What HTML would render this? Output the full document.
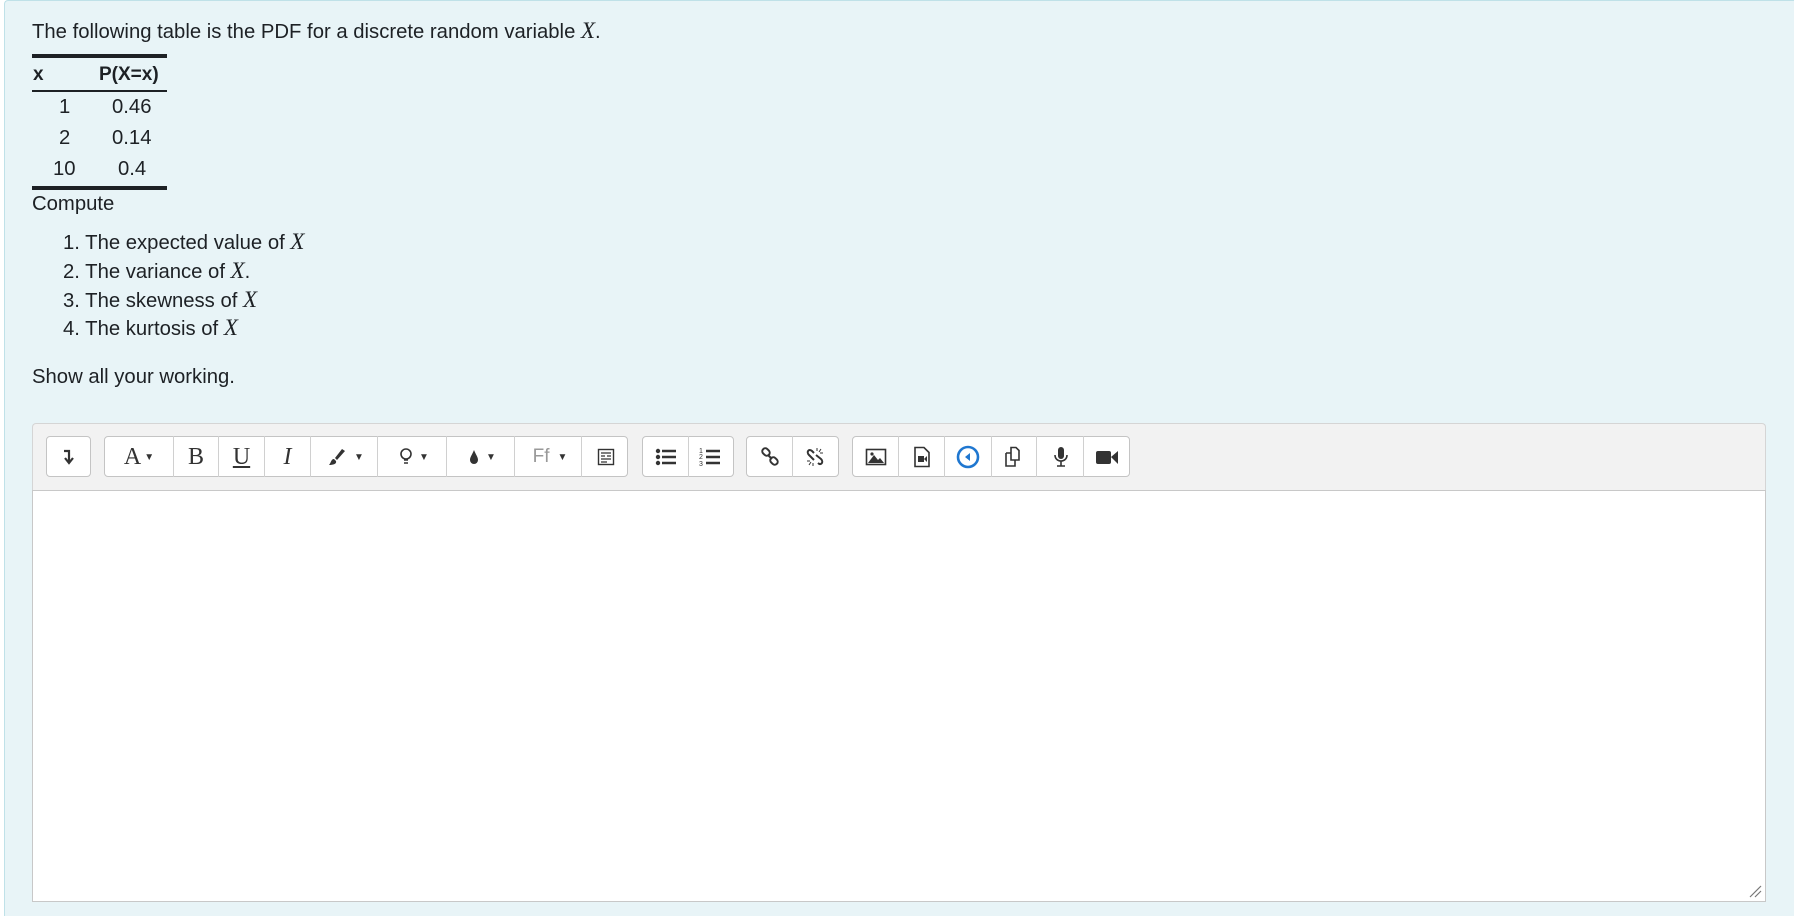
<!DOCTYPE html>
<html><head><meta charset="utf-8"><style>
*{box-sizing:border-box;margin:0;padding:0}
html,body{width:1794px;height:916px;overflow:hidden}
body{background:#fff;font-family:"Liberation Sans",sans-serif;color:#1d2125;position:relative}
.box{position:absolute;left:4px;top:0;width:1790px;height:916px;background:#e8f4f7;border:1px solid #bfe1e8;border-bottom:none;border-right:none;border-radius:4px 0 0 0}
.t{position:absolute;font-size:20.3px;white-space:nowrap;line-height:28px}
.m{font-family:"Liberation Serif",serif;font-style:italic;font-size:23px}
.hr{position:absolute;left:32px;width:135px;background:#1d2125}
.tb{position:absolute;left:32px;top:423px;width:1734px;height:68px;background:#f2f2f2;border:1px solid #d5d5d5;border-bottom:none;border-radius:4px 4px 0 0}
.ed{position:absolute;left:32px;top:490px;width:1734px;height:412px;background:#fff;border:1px solid #c8c8c8}
.g{position:absolute;top:436px;height:41px;background:#fff;border:1px solid #c4c4c4;border-radius:4px}
.sep{position:absolute;top:436px;width:1px;height:41px;background:#d0d0d0}
.ic{position:absolute;top:446px;height:22px;display:flex;align-items:center;justify-content:center;color:#333}
</style></head><body>
<div class="box"></div>
<div class="t" style="left:32px;top:17px">The following table is the PDF for a discrete random variable <span class="m">X</span>.</div>
<div class="hr" style="top:54px;height:4px"></div>
<div class="t" style="left:33px;top:61px;font-weight:bold;font-size:19px">x</div>
<div class="t" style="left:99px;top:61px;font-weight:bold;font-size:19px">P(X=x)</div>
<div class="hr" style="top:90px;height:2px"></div>
<div class="t" style="left:59px;top:93px">1</div><div class="t" style="left:112px;top:93px">0.46</div>
<div class="t" style="left:59px;top:124px">2</div><div class="t" style="left:112px;top:124px">0.14</div>
<div class="t" style="left:53px;top:155px">10</div><div class="t" style="left:118px;top:155px">0.4</div>
<div class="hr" style="top:186px;height:4px"></div>
<div class="t" style="left:32px;top:190px">Compute</div>
<div class="t" style="left:63px;top:228px">1. The expected value of <span class="m">X</span></div>
<div class="t" style="left:63px;top:257px">2. The variance of <span class="m">X</span>.</div>
<div class="t" style="left:63px;top:286px">3. The skewness of <span class="m">X</span></div>
<div class="t" style="left:63px;top:314px">4. The kurtosis of <span class="m">X</span></div>
<div class="t" style="left:32px;top:363px">Show all your working.</div>

<div class="tb"></div>
<div class="ed"></div>
<svg style="position:absolute;left:1748px;top:884px" width="14" height="14"><path d="M2 13L13 2M7 13L13 7" stroke="#777" stroke-width="1.2"/></svg>

<div class="g" style="left:46px;width:45px"></div>
<div class="g" style="left:104px;width:524px"></div>
<div class="g" style="left:642px;width:92px"></div>
<div class="g" style="left:746px;width:93px"></div>
<div class="g" style="left:852px;width:278px"></div>
<div class="sep" style="left:173px"></div><div class="sep" style="left:218px"></div><div class="sep" style="left:264px"></div><div class="sep" style="left:310px"></div><div class="sep" style="left:377px"></div><div class="sep" style="left:446px"></div><div class="sep" style="left:514px"></div><div class="sep" style="left:581px"></div>
<div class="sep" style="left:688px"></div><div class="sep" style="left:792px"></div>
<div class="sep" style="left:898px"></div><div class="sep" style="left:944px"></div><div class="sep" style="left:991px"></div><div class="sep" style="left:1036px"></div><div class="sep" style="left:1083px"></div>

<div class="ic" style="left:58px;width:20px"><svg width="14" height="18"><path d="M3 3H8V14M4 10L8 15L12 10" stroke="#333" stroke-width="2.2" fill="none"/></svg></div>
<div class="ic" style="left:114px;width:50px;font-family:'Liberation Serif',serif;font-size:24px">A<span style="font-size:10px;margin-left:3px">▼</span></div>
<div class="ic" style="left:174px;width:44px;font-family:'Liberation Serif',serif;font-size:24px">B</div>
<div class="ic" style="left:219px;width:45px;font-family:'Liberation Serif',serif;font-size:24px;text-decoration:underline">U</div>
<div class="ic" style="left:265px;width:45px;font-family:'Liberation Serif',serif;font-size:24px;font-style:italic">I</div>
<div class="ic" style="left:316px;width:60px"><svg width="22" height="20"><path d="M14 2L17 4L9 13L7 11Z M6 12C3 12 3 16 1 18C5 18 9 17 8 14Z" fill="#333"/></svg><span style="font-size:10px;margin-left:4px">▼</span></div>
<div class="ic" style="left:384px;width:60px"><svg width="14" height="20"><circle cx="7" cy="7" r="5" stroke="#333" stroke-width="1.6" fill="none"/><path d="M5 13H9M5 16H9" stroke="#333" stroke-width="1.6"/></svg><span style="font-size:10px;margin-left:6px">▼</span></div>
<div class="ic" style="left:452px;width:60px"><svg width="12" height="18"><path d="M6 2C4 7 2 9 2 12A4 4 0 0 0 10 12C10 9 8 7 6 2Z" fill="#333"/></svg><span style="font-size:10px;margin-left:6px">▼</span></div>
<div class="ic" style="left:520px;width:60px;color:#999;font-size:19px">Ff<span style="font-size:10px;margin-left:8px;color:#333">▼</span></div>
<div class="ic" style="left:586px;width:40px"><svg width="18" height="18"><rect x="1.5" y="1.5" width="15" height="15" fill="none" stroke="#333" stroke-width="1.4"/><path d="M4 5H14M4 8H8M10 8H14M4 11H14M4 14H10" stroke="#333" stroke-width="1.2"/></svg></div>
<div class="ic" style="left:646px;width:40px"><svg width="22" height="18"><circle cx="3" cy="3" r="2.2" fill="#333"/><circle cx="3" cy="9" r="2.2" fill="#333"/><circle cx="3" cy="15" r="2.2" fill="#333"/><path d="M7 3H21M7 9H21M7 15H21" stroke="#333" stroke-width="2.4"/></svg></div>
<div class="ic" style="left:690px;width:40px"><svg width="22" height="20"><text x="0" y="6" font-size="7" fill="#333" font-family="Liberation Sans">1</text><text x="0" y="12" font-size="7" fill="#333" font-family="Liberation Sans">2</text><text x="0" y="19" font-size="7" fill="#333" font-family="Liberation Sans">3</text><path d="M7 4H21M7 10H21M7 16H21" stroke="#333" stroke-width="2.4"/></svg></div>
<div class="ic" style="left:750px;width:40px"><svg width="22" height="22"><rect x="3" y="3" width="8" height="6" rx="3" transform="rotate(45 7 6)" fill="none" stroke="#333" stroke-width="2"/><rect x="11" y="12" width="8" height="6" rx="3" transform="rotate(45 15 15)" fill="none" stroke="#333" stroke-width="2"/><path d="M9 9L13 13" stroke="#333" stroke-width="2"/></svg></div>
<div class="ic" style="left:795px;width:40px"><svg width="22" height="22"><path d="M5 9C2 6 5 2 8 5M14 17C17 20 20 16 17 13M8 5L10 7M17 13L12 9M5 9L10 14" stroke="#333" stroke-width="2" fill="none"/><path d="M13 2V5M17 3L15 6M19 7H16M3 15H6M5 19L7 16M9 20V17" stroke="#333" stroke-width="1"/></svg></div>
<div class="ic" style="left:856px;width:40px"><svg width="22" height="20"><rect x="1.5" y="2.5" width="19" height="15" fill="none" stroke="#333" stroke-width="1.6"/><path d="M3 16L9 8L13 13L15 11L19 16Z" fill="#333"/><circle cx="7" cy="7" r="1.6" fill="#333"/></svg></div>
<div class="ic" style="left:901px;width:42px"><svg width="18" height="22"><path d="M2 1.5H11L16 6.5V20.5H2Z" fill="none" stroke="#333" stroke-width="1.6"/><rect x="5" y="10" width="6" height="6" fill="#333"/><path d="M11 13L14 10V16Z" fill="#333"/></svg></div>
<div class="ic" style="left:947px;width:42px"><svg width="24" height="24"><circle cx="12" cy="12" r="10" fill="none" stroke="#1f77d0" stroke-width="2.6"/><circle cx="12" cy="12" r="6" fill="#fff"/><path d="M14 8L9 12L14 16Z" fill="#1f77d0"/></svg></div>
<div class="ic" style="left:993px;width:42px"><svg width="22" height="22"><path d="M8 1.5H13L16 4.5V14H8Z M3 7H8M3 7V20H12V14" fill="none" stroke="#333" stroke-width="1.6"/></svg></div>
<div class="ic" style="left:1039px;width:43px"><svg width="16" height="22"><rect x="5" y="1" width="6" height="12" rx="3" fill="#333"/><path d="M2 9C2 17 14 17 14 9M8 15V20M4 20H12" stroke="#333" stroke-width="1.6" fill="none"/></svg></div>
<div class="ic" style="left:1085px;width:44px"><svg width="24" height="18"><rect x="1" y="3" width="15" height="13" rx="2" fill="#333"/><path d="M16 9L23 3V16Z" fill="#333"/></svg></div>
</body></html>
